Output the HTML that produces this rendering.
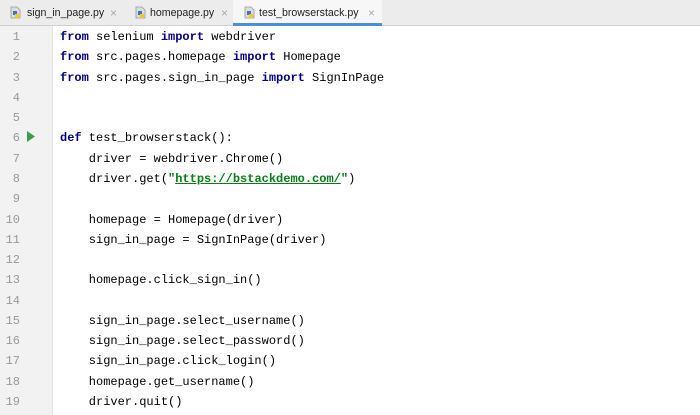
<!DOCTYPE html>
<html><head><style>
body{margin:0;width:700px;height:415px;overflow:hidden;background:#fff;font-family:"Liberation Sans",sans-serif;position:relative}
.tabs{position:absolute;left:0;top:0;width:700px;height:25px;background:#ececec;border-bottom:1px solid #d0d0d0}
.tab{position:absolute;top:0;height:25px;font-size:10.6px;line-height:26px;color:#222}
.tab .x{color:#aaa;position:absolute;top:0;font-size:12px}
.ico{position:absolute;top:6px;width:12px;height:13px}
.active{background:#f7f7f7;border-bottom:3px solid #4a8fd8;height:23px}
.gutter{position:absolute;left:0;top:26px;width:52px;height:389px;background:#f2f2f2;border-right:1px solid #e3e3e3}
.ln{position:absolute;left:0;width:20px;text-align:right;font:12px "Liberation Mono",monospace;color:#999}
.code{position:absolute;left:60px;font:12px "Liberation Mono",monospace;color:#000;white-space:pre}
.k{color:#000080;font-weight:bold}
.s{color:#067d17;font-weight:bold}
.u{text-decoration:underline}
</style></head><body>
<div class="tabs">
 <div class="tab" style="left:0;width:125px"><svg class="ico" style="left:9px" viewBox="0 0 12 13"><path d="M2 1h6l3 3v8H2z" fill="#ddd" stroke="#999" stroke-width=".8"/><rect x="4" y="5" width="4" height="4" fill="#3b77b8"/><rect x="6" y="8" width="4" height="4" fill="#f3c633"/></svg><span style="position:absolute;left:27px">sign_in_page.py</span><span class="x" style="left:110px">×</span></div>
 <div class="tab" style="left:125px;width:108px"><svg class="ico" style="left:9px" viewBox="0 0 12 13"><path d="M2 1h6l3 3v8H2z" fill="#ddd" stroke="#999" stroke-width=".8"/><rect x="4" y="5" width="4" height="4" fill="#3b77b8"/><rect x="6" y="8" width="4" height="4" fill="#f3c633"/></svg><span style="position:absolute;left:25px">homepage.py</span><span class="x" style="left:96px">×</span></div>
 <div class="tab active" style="left:233px;width:149px"><svg class="ico" style="left:10px" viewBox="0 0 12 13"><path d="M2 1h6l3 3v8H2z" fill="#ddd" stroke="#999" stroke-width=".8"/><rect x="4" y="5" width="4" height="4" fill="#3b77b8"/><rect x="6" y="8" width="4" height="4" fill="#f3c633"/></svg><span style="position:absolute;left:26px">test_browserstack.py</span><span class="x" style="left:135px">×</span></div>
</div>
<div class="gutter"></div>
<div id="lines"></div>
<svg style="position:absolute;left:26px;top:131px" width="10" height="11"><path d="M1 0L9 5.5L1 11z" fill="#3d9c4a"/></svg>
<script>
var code=[
'<span class="k">from</span> selenium <span class="k">import</span> webdriver',
'<span class="k">from</span> src.pages.homepage <span class="k">import</span> Homepage',
'<span class="k">from</span> src.pages.sign_in_page <span class="k">import</span> SignInPage',
'','',
'<span class="k">def</span> test_browserstack():',
'    driver = webdriver.Chrome()',
'    driver.get(<span class="s">"<span class="u">https://bstackdemo.com/</span>"</span>)',
'',
'    homepage = Homepage(driver)',
'    sign_in_page = SignInPage(driver)',
'',
'    homepage.click_sign_in()',
'',
'    sign_in_page.select_username()',
'    sign_in_page.select_password()',
'    sign_in_page.click_login()',
'    homepage.get_username()',
'    driver.quit()'];
var h='';
for(var i=0;i<code.length;i++){var t=27+i*20.28;
h+='<div class="ln" style="top:'+(t+3)+'px">'+(i+1)+'</div><div class="code" style="top:'+(t+3)+'px">'+code[i]+'</div>';}
document.getElementById('lines').innerHTML=h;
</script>
</body></html>
